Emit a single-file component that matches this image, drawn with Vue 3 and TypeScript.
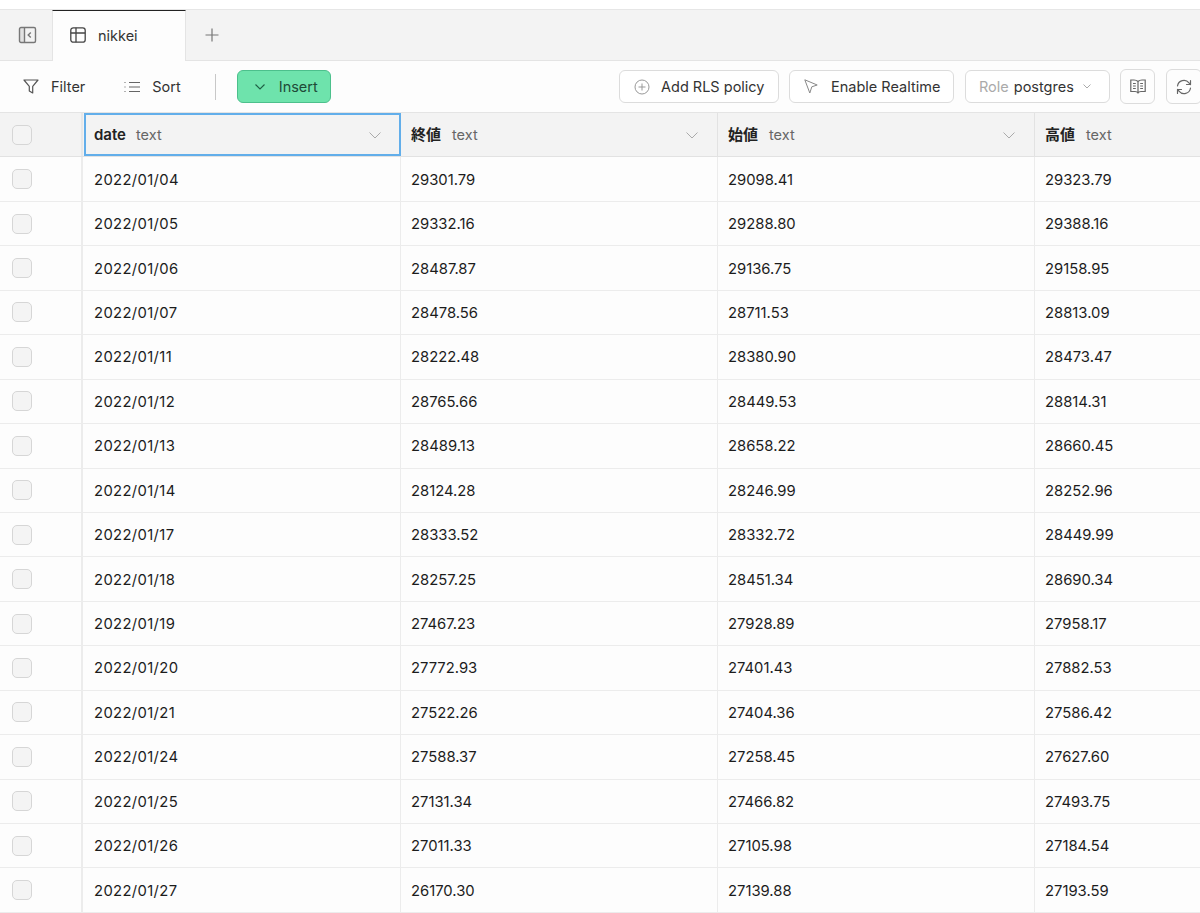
<script setup lang="ts">
const rows: string[][] = [
  ['2022/01/04','29301.79','29098.41','29323.79'],
  ['2022/01/05','29332.16','29288.80','29388.16'],
  ['2022/01/06','28487.87','29136.75','29158.95'],
  ['2022/01/07','28478.56','28711.53','28813.09'],
  ['2022/01/11','28222.48','28380.90','28473.47'],
  ['2022/01/12','28765.66','28449.53','28814.31'],
  ['2022/01/13','28489.13','28658.22','28660.45'],
  ['2022/01/14','28124.28','28246.99','28252.96'],
  ['2022/01/17','28333.52','28332.72','28449.99'],
  ['2022/01/18','28257.25','28451.34','28690.34'],
  ['2022/01/19','27467.23','27928.89','27958.17'],
  ['2022/01/20','27772.93','27401.43','27882.53'],
  ['2022/01/21','27522.26','27404.36','27586.42'],
  ['2022/01/24','27588.37','27258.45','27627.60'],
  ['2022/01/25','27131.34','27466.82','27493.75'],
  ['2022/01/26','27011.33','27105.98','27184.54'],
  ['2022/01/27','26170.30','27139.88','27193.59'],
]
const cols = ['date', '終値', '始値', '高値']
</script>

<template>
  <div class="page">
    <div class="tabs">
      <div class="side">
        <svg width="20" height="18" viewBox="0 0 20 18" fill="none" stroke="#777" stroke-width="1.4">
          <rect x="2" y="2" width="4.500" height="14" fill="#e2e2e2" stroke="none" />
          <rect x="1.500" y="1.500" width="16" height="15" rx="1.500" />
          <path d="M6.500 1.500v15" />
          <path d="M12.800 6.500 10.200 9l2.600 2.500" />
        </svg>
      </div>
      <div class="tab">
        <svg width="16" height="16" viewBox="0 0 16 16" fill="none" stroke="#444" stroke-width="1.300">
          <rect x=".8" y=".8" width="14.400" height="14.400" rx="2.500" />
          <path d="M.8 6h14.400M6 .8v14.400" />
        </svg>
        <span>nikkei</span>
      </div>
      <div class="plus">
        <svg width="14" height="14" viewBox="0 0 14 14" fill="none" stroke="#777" stroke-width="1.200">
          <path d="M7 .5v13M.5 7h13" />
        </svg>
      </div>
    </div>

    <div class="toolbar">
      <div class="tool filter">
        <svg width="16" height="15" viewBox="0 0 16 15" fill="none" stroke="#555" stroke-width="1.200" stroke-linejoin="round">
          <path d="M1 1h14L9.700 7.400V14l-3.400-2V7.400z" />
        </svg>
        <span>Filter</span>
      </div>
      <div class="tool sort">
        <svg width="16" height="12" viewBox="0 0 16 12" fill="none" stroke="#666" stroke-width="1.100">
          <path d="M5 1.500h11M5 6h11M5 10.500h11" />
          <path d="M.5 1.500h2M.5 6h2M.5 10.500h2" stroke-dasharray="1 1" />
        </svg>
        <span>Sort</span>
      </div>
      <div class="divider"></div>
      <div class="insert">
        <svg width="10" height="6" viewBox="0 0 10 6" fill="none" stroke="#1f5f45" stroke-width="1.100">
          <path d="m.5.500 4.500 4.500L9.500.500" />
        </svg>
        <span>Insert</span>
      </div>
      <div class="spacer"></div>
      <div class="btn rls">
        <svg width="16" height="16" viewBox="0 0 16 16" fill="none" stroke="#999" stroke-width="1">
          <circle cx="8" cy="8" r="7" />
          <path d="M8 4.500v7M4.500 8h7" />
        </svg>
        <span>Add RLS policy</span>
      </div>
      <div class="btn realtime">
        <svg width="14" height="15" viewBox="0 0 14 15" fill="none" stroke="#888" stroke-width="1" stroke-linejoin="round">
          <path d="M.8.800 13.200 6 7.800 7.800 5.800 14z" />
        </svg>
        <span>Enable Realtime</span>
      </div>
      <div class="btn role">
        <span class="muted">Role</span>
        <span>postgres</span>
        <svg width="8" height="5" viewBox="0 0 8 5" fill="none" stroke="#aaa" stroke-width="1">
          <path d="m.5.500 3.500 3.500L7.500.500" />
        </svg>
      </div>
      <div class="square book">
        <svg width="16" height="16" viewBox="0 0 16 16" fill="none" stroke="#666" stroke-width="1.200">
          <path d="M8 2.500Q6.500 1 4 1H.8v11.500H5Q7 12.500 8 14q1-1.500 3-1.500h4.200V1H12Q9.500 1 8 2.500zM8 2.500V14" />
          <path d="M3 4.500h2.800M3 7h2.800M3 9.500h2.800M10.200 4.500H13M10.200 7H13M10.200 9.500H13" stroke-width="1" />
        </svg>
      </div>
      <div class="square refresh">
        <svg width="16" height="16" viewBox="0 0 16 16" fill="none" stroke="#666" stroke-width="1.200" stroke-linecap="round" stroke-linejoin="round">
          <path d="M1.500 7A6.500 6.500 0 0 1 13 3.800L14.500 5.500M14.500 1.500v4h-4" />
          <path d="M14.500 9A6.500 6.500 0 0 1 3 12.200L1.500 10.500M1.500 14.500v-4h4" />
        </svg>
      </div>
    </div>

    <div class="grid">
      <div class="row head">
        <div class="cell check"><i class="box"></i></div>
        <div v-for="(c, i) in cols" :key="c" class="cell" :class="['c' + i, { focused: i === 0 }]">
          <b :class="{ cjk: i > 0 }">{{ c }}</b>
          <span class="type">text</span>
          <svg v-if="i < 3" class="chev" width="12" height="7" viewBox="0 0 12 7" fill="none" stroke="#aaa" stroke-width="1">
            <path d="m.5.500 5.500 5.500L11.500.500" />
          </svg>
        </div>
      </div>
      <div v-for="r in rows" :key="r[0]" class="row body">
        <div class="cell check"><i class="box"></i></div>
        <div v-for="(v, i) in r" :key="i" class="cell" :class="'c' + i">{{ v }}</div>
      </div>
    </div>
  </div>
</template>

<style>
html, body { margin: 0; background: #fff; }
</style>

<style scoped>
.page {
  width: 1200px;
  height: 913px;
  overflow: hidden;
  box-sizing: border-box;
  padding-top: 9px;
  background: #fff;
  font-family: Inter, "Noto Sans CJK JP", sans-serif;
  font-size: 14.500px;
  color: #1c1c1c;
}
.tabs {
  display: flex;
  height: 52px;
  box-sizing: border-box;
  background: #f3f3f3;
  border-top: 1px solid #e6e6e6;
  border-bottom: 1px solid #e4e4e4;
}
.side {
  width: 52px;
  display: flex;
  align-items: center;
  padding-left: 18px;
  box-sizing: border-box;
}
.tab {
  width: 134px;
  margin-bottom: -1px;
  padding-bottom: 2px;
  box-sizing: border-box;
  background: #fdfdfd;
  border-top: 1px solid #222;
  border-left: 1px solid #e4e4e4;
  border-right: 1px solid #e4e4e4;
  display: flex;
  align-items: center;
  gap: 12px;
  padding-left: 17px;
  color: #333;
}
.plus {
  display: flex;
  align-items: center;
  padding-left: 19px;
}
.toolbar {
  height: 51px;
  display: flex;
  align-items: center;
  background: #fdfdfd;
  box-sizing: border-box;
  color: #333;
}
.tool {
  display: flex;
  align-items: center;
}
.filter { margin-left: 23px; gap: 12px; }
.sort { margin-left: 39px; gap: 12px; }
.divider {
  width: 1px;
  height: 26px;
  background: #c8c8c8;
  margin-left: 34px;
}
.insert {
  margin-left: 21px;
  width: 94px;
  height: 33px;
  box-sizing: border-box;
  background: #6ee3ac;
  border: 1px solid #4cc08c;
  border-radius: 6px;
  display: flex;
  align-items: center;
  gap: 14px;
  padding-left: 17px;
  color: #204a38;
}
.spacer { flex: 1; }
.btn {
  height: 33px;
  box-sizing: border-box;
  background: #fff;
  border: 1px solid #dcdcdc;
  border-radius: 6px;
  display: flex;
  align-items: center;
  margin-right: 10px;
  white-space: nowrap;
}
.rls { width: 160px; gap: 11px; padding-left: 14px; }
.realtime { width: 165px; gap: 13px; padding-left: 14px; margin-right: 11px; }
.role { width: 145px; gap: 5px; padding-left: 13px; margin-right: 10px; }
.role svg { margin-left: 4px; }
.muted { color: #aaa; }
.square {
  height: 35px;
  box-sizing: border-box;
  border: 1px solid #dcdcdc;
  border-radius: 6px;
  display: flex;
  align-items: center;
  justify-content: center;
}
.book { width: 35px; margin-right: 11px; }
.refresh { width: 36px; flex: none; margin-right: -2px; }
.grid {
  border-top: 1px solid #e4e4e4;
}
.row {
  display: flex;
  height: 44.440px;
  box-sizing: border-box;
  border-bottom: 1px solid #ececec;
  background: #fdfdfd;
  font-size: 14.800px;
}
.cell {
  box-sizing: border-box;
  display: flex;
  align-items: center;
  padding-left: 10px;
  border-right: 1px solid #ececec;
  color: #1c1c1c;
  flex: none;
  position: relative;
}
.body .c0, .body .c1, .body .c2, .body .c3 { padding-top: 1px; }
.check {
  width: 83px;
  margin-right: 1px;
  padding-left: 12px;
  border-right: 2px solid #ececec;
}
.c0 { width: 317px; letter-spacing: .36px; }
.c1 { width: 317px; }
.c2 { width: 317px; }
.c3 { width: 170px; border-right: none; }
.box {
  width: 20px;
  height: 20px;
  box-sizing: border-box;
  border: 1px solid #d6d6d6;
  border-radius: 5px;
  background: #f4f4f4;
}
.head {
  background: #f3f3f3;
  border-bottom: 1px solid #e2e2e2;
  font-size: 15px;
}
.head .cell { border-right-color: #e2e2e2; letter-spacing: 0; }
.head .check { border-right-color: #e8e8e8; }
.head b { font-weight: 600; color: #222; }
.head b.cjk { margin-bottom: 2px; }
.type {
  margin-left: 11px;
  color: #666;
  font-size: 14.500px;
}
.head .c0 .type { margin-left: 10px; }
.chev {
  position: absolute;
  right: 19px;
  top: 19px;
}
.head .c0 .chev { right: 20px; }
.focused {
  box-shadow: inset 0 0 0 2px #62aeea;
  border-right: none;
}
</style>
